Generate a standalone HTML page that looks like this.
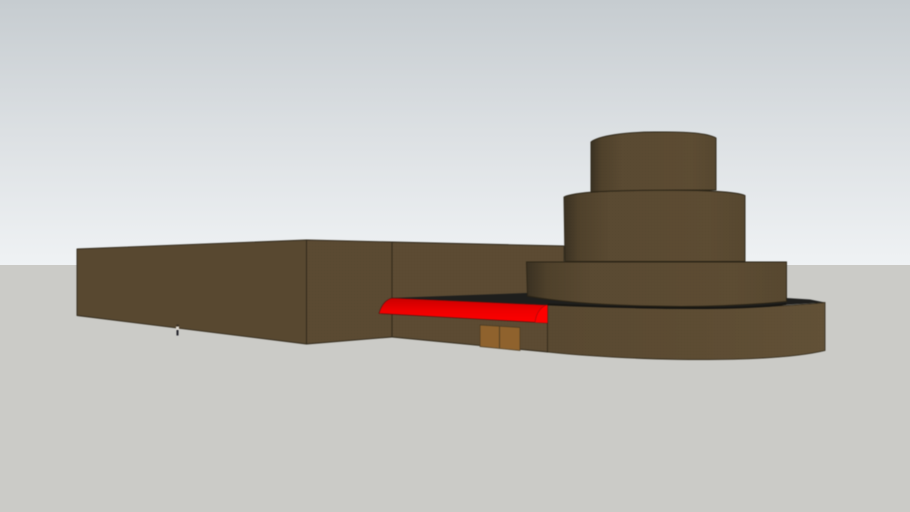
<!DOCTYPE html>
<html>
<head>
<meta charset="utf-8">
<style>
html,body{margin:0;padding:0;width:910px;height:512px;overflow:hidden;background:#cbcbc7}
svg{display:block}
.soft{filter:blur(.5px)}
</style>
</head>
<body>
<svg width="910" height="512" viewBox="0 0 910 512" xmlns="http://www.w3.org/2000/svg">
<defs>
<linearGradient id="sky" x1="0" y1="0" x2="0" y2="1">
<stop offset="0" stop-color="#c6ccd0"/>
<stop offset=".5" stop-color="#dce0e3"/>
<stop offset="1" stop-color="#eff2f4"/>
</linearGradient>
<linearGradient id="c1" x1="0" y1="0" x2="1" y2="0">
<stop offset="0" stop-color="#3a3122"/><stop offset=".08" stop-color="#4f412b"/><stop offset=".25" stop-color="#5a4a32"/><stop offset=".8" stop-color="#5d4c33"/><stop offset="1" stop-color="#574830"/>
</linearGradient>
<linearGradient id="c2" x1="0" y1="0" x2="1" y2="0">
<stop offset="0" stop-color="#594931"/><stop offset=".5" stop-color="#5d4c33"/><stop offset="1" stop-color="#625137"/>
</linearGradient>
<linearGradient id="red" x1="0" y1="0" x2="0" y2="1">
<stop offset="0" stop-color="#c80000"/><stop offset=".5" stop-color="#ee0000"/><stop offset="1" stop-color="#ff0000"/>
</linearGradient>
<pattern id="tex" width="3" height="3" patternUnits="userSpaceOnUse">
<rect width="1" height="1" fill="#000" fill-opacity=".05"/>
</pattern>
</defs>

<rect width="910" height="265" fill="url(#sky)"/>
<rect y="265" width="910" height="247" fill="#cbcbc7"/>

<g class="soft">
<g stroke="#30281a" stroke-width=".9" stroke-linejoin="round">
<path d="M392 242L564 246V300L548 352L392 337Z" fill="#5c4b33"/>
<path d="M306.500 240L392 242V337L306.500 344Z" fill="#5b4a32"/>
<path d="M77 249L306.500 240V344L77 315.500Z" fill="#584830"/>
</g>
<path d="M392 242L564 246V300L548 352L392 337Z" fill="url(#tex)"/>
<path d="M306.500 240L392 242V337L306.500 344Z" fill="url(#tex)"/>

<!-- black roof -->
<path d="M390 298L527 293L600 300L786 298L810 299.500L825 302.500L700 310L548 305Z" fill="#1e1e1c"/>

<!-- base drum -->
<path d="M547.500 304C620 307.500 740 311 825 302.500V350.500C790 359 730 360 680 359.500C630 358.500 585 356 547.500 352Z" fill="url(#c2)" stroke="#2e2617" stroke-width=".8"/>
<path d="M547.500 304C620 307.500 740 311 825 302.500V350.500C790 359 730 360 680 359.500C630 358.500 585 356 547.500 352Z" fill="url(#tex)"/>
<path d="M547.500 304.500C620 307.500 740 311 786 304" fill="none" stroke="#151411" stroke-width="1.800"/>

<!-- doors -->
<path d="M480 325L520 327.500V350.500L480 346.500Z" fill="#8f622d" stroke="#4a3a22" stroke-width=".7"/>
<path d="M499.500 326.500V348.500" stroke="#4a3a22" stroke-width=".9"/>

<!-- red awning -->
<path d="M379 313.500C381 306 385 300 392 298L547.500 305V323Z" fill="url(#red)" stroke="#4a1410" stroke-width=".6"/>
<path d="M547.500 305C541 307 536 314 535 322.500L547.500 323Z" fill="#ff0000"/>
<path d="M546 305C540 308 536 314 535 322.500" fill="none" stroke="#960c0c" stroke-width=".6"/>

<!-- third tier -->
<path d="M526.500 262H786.500V301.500C740 306 690 307 650 306C600 305 560 302 527.500 296Z" fill="url(#c1)" stroke="#2b2416" stroke-width=".9"/>
<path d="M526.500 262H786.500V301.500C740 306 690 307 650 306C600 305 560 302 527.500 296Z" fill="url(#tex)"/>

<!-- second tier -->
<path d="M564 197C574 192 615 190 655 190C695 190 735 191 745 195.500V261.500H565Z" fill="url(#c1)" stroke="#2b2416" stroke-width=".9"/>
<path d="M564 197C574 192 615 190 655 190C695 190 735 191 745 195.500V261.500H565Z" fill="url(#tex)"/>

<!-- top tier -->
<path d="M591 142C598 136 625 132 655 132C685 131.500 708 133 716 138V190C690 190 620 190 591 192Z" fill="url(#c1)" stroke="#2b2416" stroke-width=".9"/>
<path d="M591 142C598 136 625 132 655 132C685 131.500 708 133 716 138V190C690 190 620 190 591 192Z" fill="url(#tex)"/>

<!-- figure -->
<rect x="176.300" y="324.500" width="2.600" height="2.200" fill="#3a2f22"/>
<rect x="176" y="326.500" width="3" height="3.500" fill="#ddd8cf"/>
<rect x="176.500" y="330" width="2" height="5.500" fill="#22222a"/>
</g>
</svg>
</body>
</html>
